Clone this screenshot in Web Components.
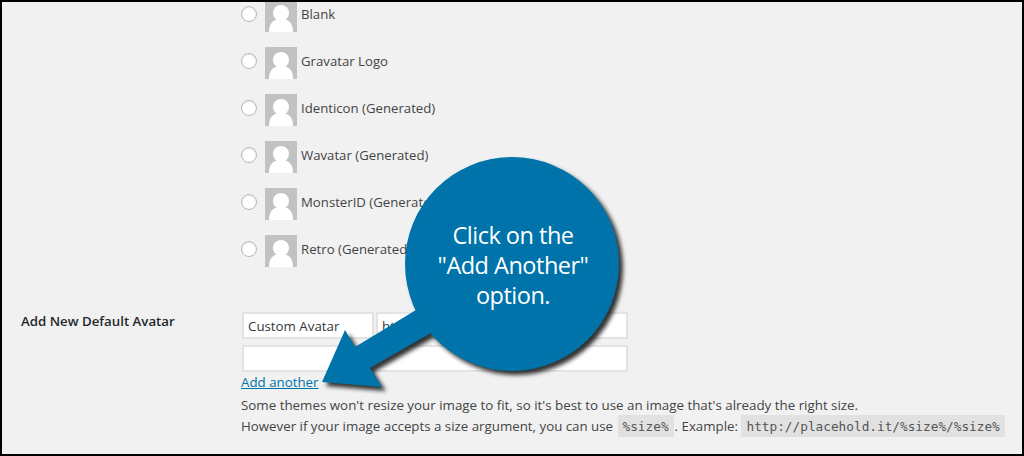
<!DOCTYPE html>
<html>
<head>
<meta charset="utf-8">
<title>Avatars</title>
<style>
  html, body { margin: 0; padding: 0; background: #f1f1f1; }
  body { font-family: "Open Sans", sans-serif; font-size: 13.2px; color: #444; }
</style>
</head>
<body>
<template id="avatar-option-tpl">
  <style>
    :host { display: flex; align-items: flex-start; height: 47px; }
    .radio {
      width: 16px; height: 16px; box-sizing: border-box; margin: 6px 8px 0 0;
      border: 1px solid #b4b9be; border-radius: 50%; background: #fff;
      box-shadow: inset 0 1px 2px rgba(0,0,0,.1);
    }
    svg { display: block; width: 32px; height: 32px; margin-right: 4px; }
    .label { line-height: 18px; padding-top: 5px; }
  </style>
  <span class="radio"></span>
  <svg viewBox="0 0 32 32">
    <rect width="32" height="32" fill="#c2c2c2"/>
    <circle cx="16" cy="13" r="8" fill="#fff"/>
    <path d="M4 32c0-9 4-13 12-13s12 4 12 13z" fill="#fff"/>
  </svg>
  <span class="label"><slot></slot></span>
</template>

<template id="avatar-form-tpl">
  <style>
    :host { display: grid; grid-template-columns: 220px 1fr; padding: 0 0 0 19px; margin-top: 30px; }
    .title { font-weight: 600; font-size: 13.25px; color: #23282d; line-height: 18px; }
    .fields { display: grid; grid-template-columns: 132px 252px; gap: 6px 2px; width: 386px; margin-left: 1px; }
    .box {
      box-sizing: border-box; height: 27px; background: #fff; border: 2px solid #e3e3e3;
      padding: 0 4px; font-size: 13.3px; line-height: 25px; color: #32373c;
      white-space: nowrap; overflow: hidden;
    }
    .wide { grid-column: 1 / 3; }
    a { display: block; color: #0073aa; text-decoration: underline; font-size: 13.3px; line-height: 18px; margin-top: 1px; }
    .help { margin-top: 4px; font-size: 13.35px; line-height: 21px; white-space: nowrap; }
    .second { font-size: 13.3px; }
    code {
      font-family: "DejaVu Sans Mono", monospace; font-size: 12.75px;
      background: #e1e1e1; color: #555; padding: 4px 5px 3px; margin: 0 1px;
    }
    code.url { margin-left: 0; }
  </style>
  <div class="title"><slot name="title"></slot></div>
  <div>
    <div class="fields">
      <div class="box">Custom Avatar</div>
      <div class="box">http://</div>
      <div class="box wide"></div>
    </div>
    <a href="#">Add another</a>
    <div class="help">
      Some themes won't resize your image to fit, so it's best to use an image that's already the right size.<br>
      <span class="second">However if your image accepts a size argument, you can use <code>%size%</code>. Example: <code class="url">http://placehold.it/%size%/%size%</code></span>
    </div>
  </div>
</template>

<template id="callout-arrow-tpl">
  <style>
    :host { position: absolute; left: 320px; top: 155px; width: 300px; height: 232px; }
    svg { position: absolute; inset: 0; overflow: visible; filter: drop-shadow(4px 4px 2px rgba(0,0,0,.8)); }
    .text {
      position: absolute; left: 84px; top: 63px; width: 214px; text-align: center;
      color: #fff; font-size: 23.5px; letter-spacing: -.5px; line-height: 30px; font-family: "Open Sans", sans-serif;
    }
  </style>
  <svg width="300" height="232" viewBox="0 0 300 232">
    <path d="M0 225L23 173L33 190L94 153L109 176L48 211L60 230Z" fill="#0073aa"/>
    <circle cx="190" cy="107" r="107" fill="#0073aa"/>
  </svg>
  <div class="text"><slot></slot></div>
</template>

<template id="settings-page-tpl">
  <style>
    :host { display: block; position: relative; box-sizing: border-box; width: 1024px; height: 456px;
      border: 2px solid #000; background: #f1f1f1; overflow: hidden; }
    .list { margin: -2px 0 0 239px; }
  </style>
  <div class="list"><slot name="options"></slot></div>
  <slot></slot>
</template>

<settings-page>
  <div slot="options">
    <avatar-option>Blank</avatar-option>
    <avatar-option>Gravatar Logo</avatar-option>
    <avatar-option>Identicon (Generated)</avatar-option>
    <avatar-option>Wavatar (Generated)</avatar-option>
    <avatar-option>MonsterID (Generated)</avatar-option>
    <avatar-option>Retro (Generated)</avatar-option>
  </div>
  <avatar-form><span slot="title">Add New Default Avatar</span></avatar-form>
  <callout-arrow>Click on the<br>"Add Another"<br>option.</callout-arrow>
</settings-page>

<script>
  function simple(name, tplId) {
    customElements.define(name, class extends HTMLElement {
      constructor() {
        super();
        this.attachShadow({ mode: "open" });
        this.shadowRoot.appendChild(document.getElementById(tplId).content.cloneNode(true));
      }
    });
  }
  simple("avatar-option", "avatar-option-tpl");
  simple("avatar-form", "avatar-form-tpl");
  simple("callout-arrow", "callout-arrow-tpl");
  simple("settings-page", "settings-page-tpl");
</script>
</body>
</html>
